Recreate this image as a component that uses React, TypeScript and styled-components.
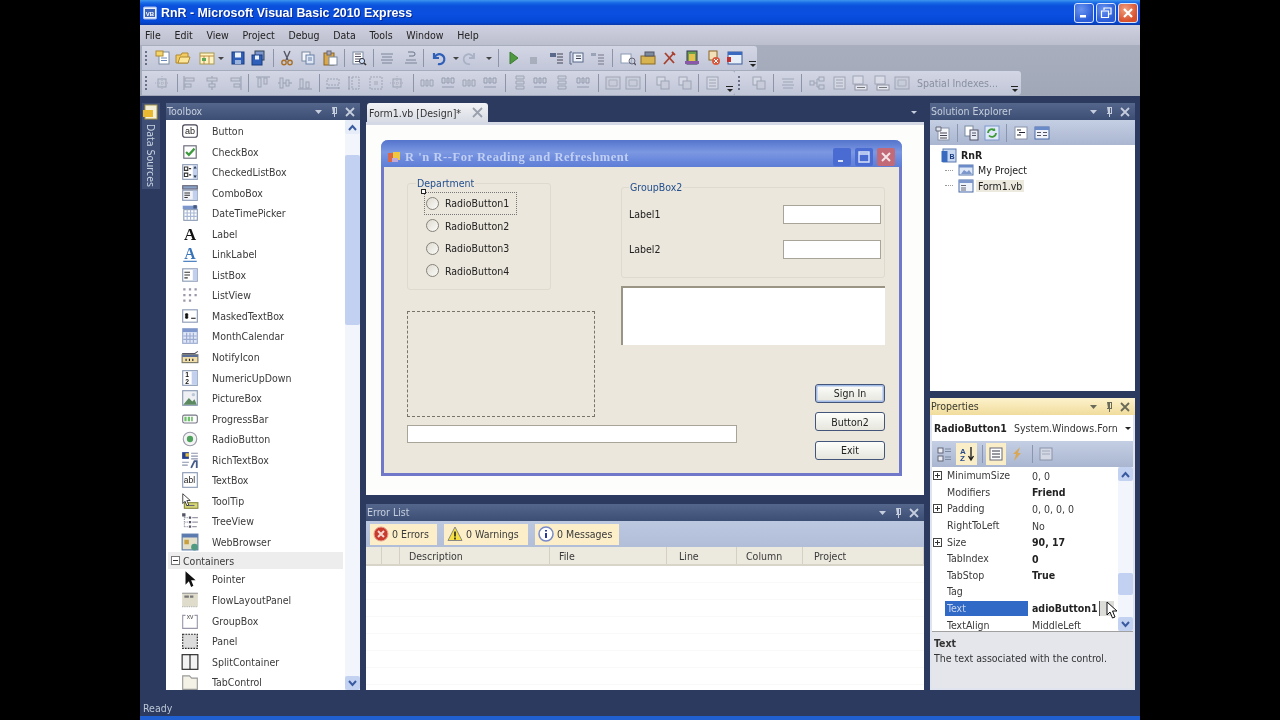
import React from 'react';
import styled, { createGlobalStyle } from 'styled-components';

const GlobalStyle = createGlobalStyle`
  html, body {
    margin: 0;
    padding: 0;
    background: #000;
    overflow: hidden;
  }
  * { box-sizing: border-box; }
`;

const ui = `'DejaVu Sans Condensed', 'DejaVu Sans', 'Liberation Sans', sans-serif`;

const Window = styled.div`
  width: 1000px;
  height: 720px;
  margin: 0 auto;
  display: flex;
  flex-direction: column;
  font-family: ${ui};
  font-stretch: condensed;
  font-size: 10.5px;
  color: #333;
  background: #2b3a5e;
  filter: blur(0.5px);
`;

const TitleBar = styled.div`
  height: 25px;
  display: flex;
  align-items: center;
  padding: 0 2px 0 3px;
  background: linear-gradient(#3f95ee 0, #1668e6 3px, #0a50dc 6px, #0a4fe0 14px, #0448d6 22px, #0a3aa8 25px);
`;

const TitleText = styled.div`
  margin-left: 4px;
  flex: 1;
  color: #fff;
  font-family: 'Liberation Sans', Arial, sans-serif;
  font-size: 12.4px;
  font-weight: 700;
  text-shadow: 1px 1px 0 #0a2a90;
`;

const CaptionButton = styled.div<{ $close?: boolean }>`
  width: 20px;
  height: 20px;
  margin-left: 2px;
  border: 1px solid #d8e4fa;
  border-radius: 3px;
  display: flex;
  align-items: center;
  justify-content: center;
  background: ${(p) => (p.$close ? 'radial-gradient(circle at 35% 30%, #f0a080, #d8502c 70%)' : 'radial-gradient(circle at 35% 30%, #6a94f0, #2a5cd8 70%)')};
`;

const MenuBar = styled.div`
  height: 20px;
  display: flex;
  align-items: center;
  padding-left: 5px;
  gap: 13.7px;
  color: #222;
  background: linear-gradient(#cfd0e0, #bcbfce);
`;

const ToolArea = styled.div`
  height: 51px;
  padding: 1px 0 0 2px;
  display: flex;
  flex-direction: column;
  gap: 1px;
  background: linear-gradient(#a9aebe, #a0a8b8);
`;

const ToolRow = styled.div`
  height: 24px;
  display: flex;
`;

const ToolStrip = styled.div<{ $width: number }>`
  width: ${(p) => p.$width}px;
  height: 24px;
  flex: none;
  display: flex;
  align-items: center;
  padding-left: 3px;
  border-radius: 0 3px 3px 0;
  background: linear-gradient(#d3d6e4, #c1c6d8);
`;

const Grip = styled.div`
  width: 2px;
  height: 14px;
  margin-right: 2px;
  background: repeating-linear-gradient(#6a7088 0 2px, transparent 2px 4px);
`;

const ToolSep = styled.div<{ $gap: number }>`
  width: 1px;
  height: 18px;
  margin-left: ${(p) => p.$gap}px;
  background: #8e94a8;
`;

const ToolSlot = styled.div<{ $gap: number; $dim?: boolean }>`
  width: 16px;
  height: 16px;
  flex: none;
  margin-left: ${(p) => p.$gap}px;
  opacity: ${(p) => (p.$dim ? 0.55 : 1)};
`;

const ToolDrop = styled.div<{ $gap: number }>`
  width: 7px;
  flex: none;
  margin-left: ${(p) => p.$gap}px;
  display: flex;
  justify-content: center;
`;

const Caret = styled.div<{ $color?: string }>`
  width: 0;
  height: 0;
  border-left: 3px solid transparent;
  border-right: 3px solid transparent;
  border-top: 3px solid ${(p) => p.$color || '#444'};
`;

const MoreGlyph = styled.div<{ $gap: number }>`
  margin-left: ${(p) => p.$gap}px;
  align-self: flex-end;
  margin-bottom: 3px;
  width: 7px;
  border-top: 1px solid #222;
  padding-top: 2px;
  display: flex;
  justify-content: center;
`;

const SpatialText = styled.div`
  margin-left: 7px;
  width: 94px;
  color: #8a90a0;
  white-space: nowrap;
`;

const Workspace = styled.div`
  height: 601px;
  display: flex;
  padding: 7px 5px 7px 2px;
  background: #2b3a5e;
`;

const SideTabs = styled.div`
  width: 24px;
  flex: none;
`;

const SideTab = styled.div`
  width: 18px;
  height: 86px;
  padding-top: 1px;
  display: flex;
  flex-direction: column;
  align-items: center;
  gap: 4px;
  background: #3e4e74;
`;

const SideTabText = styled.div`
  writing-mode: vertical-rl;
  color: #c8d2e2;
  white-space: nowrap;
`;

const DockHeader = styled.div<{ $active?: boolean }>`
  height: 17px;
  flex: none;
  display: flex;
  align-items: center;
  padding: 0 3px 0 1px;
  color: ${(p) => (p.$active ? '#3a3a30' : '#c6cede')};
  background: ${(p) => (p.$active ? 'linear-gradient(#fdf2cc, #f0dc9c)' : 'linear-gradient(#54668c, #3c4e74)')};
`;

const DockTitle = styled.div`
  flex: 1;
  margin-top: -1px;
  white-space: nowrap;
`;

const Toolbox = styled.div`
  width: 194px;
  flex: none;
  display: flex;
  flex-direction: column;
`;

const ToolboxBody = styled.div`
  position: relative;
  flex: 1;
  min-height: 0;
  display: flex;
  background: #fff;
`;

const ToolboxList = styled.div`
  flex: 1;
  padding-top: 0.7px;
  overflow: hidden;
`;

const ToolboxItem = styled.div`
  height: 20.55px;
  display: flex;
  align-items: center;
  padding-left: 15px;
  color: #3a3a3a;
`;

const ItemIcon = styled.div`
  width: 18px;
  height: 18px;
  margin-right: 13px;
  flex: none;
`;

const ToolboxGroup = styled.div`
  height: 17px;
  margin: 0 2px;
  display: flex;
  align-items: center;
  padding-left: 3px;
  gap: 3px;
  color: #3a3a3a;
  background: #ededed;
`;

const TreeBox = styled.div`
  width: 9px;
  height: 9px;
  flex: none;
  border: 1px solid #777;
  display: flex;
  align-items: center;
  justify-content: center;
  background: #fff;
  position: relative;
  &::after {
    content: '';
    width: 5px;
    height: 1px;
    background: #333;
  }
`;

const PlusBox = styled(TreeBox)`
  border-color: #444;
  &::before {
    content: '';
    position: absolute;
    width: 1px;
    height: 5px;
    background: #333;
  }
`;

const Scrollbar = styled.div<{ $width: number }>`
  width: ${(p) => p.$width}px;
  flex: none;
  display: flex;
  flex-direction: column;
  background: #f2f5fb;
`;

const ScrollButton = styled.div<{ $tint?: boolean }>`
  height: 14px;
  flex: none;
  display: flex;
  align-items: center;
  justify-content: center;
  border-radius: 2px;
  background: ${(p) => (p.$tint ? '#c4d2f2' : '#e6ecf8')};
`;

const ScrollTrack = styled.div<{ $top: number; $size: number }>`
  flex: 1;
  padding-top: ${(p) => p.$top}px;
  &::before {
    content: '';
    display: block;
    height: ${(p) => p.$size}px;
    border-radius: 2px;
    background: #c2d0f1;
  }
`;

const CursorMark = styled.svg<{ $left: number; $top: number }>`
  position: absolute;
  left: ${(p) => p.$left}px;
  top: ${(p) => p.$top}px;
`;

const Center = styled.div`
  width: 558px;
  margin-left: 6px;
  flex: none;
  display: flex;
  flex-direction: column;
`;

const DocTabs = styled.div`
  height: 19px;
  flex: none;
  display: flex;
  align-items: flex-end;
  justify-content: space-between;
  padding: 0 7px 0 1px;
`;

const DocTab = styled.div`
  width: 121px;
  height: 19px;
  display: flex;
  align-items: center;
  justify-content: space-between;
  padding: 0 5px 0 2px;
  color: #333;
  white-space: nowrap;
  border-radius: 3px 3px 0 0;
  background: linear-gradient(#f2f3f6, #d8dbe4);
`;

const DocMenu = styled.div`
  align-self: center;
  display: flex;
`;

const DocArea = styled.div`
  height: 373px;
  flex: none;
  padding: 18px 0 0 15px;
  border-top: 3px solid #d5d9e6;
  background: #fdfdfc;
`;

const Form = styled.div`
  width: 521px;
  height: 336px;
  margin-top: -3px;
  border: 3px solid #7078ca;
  border-top-width: 0;
  border-radius: 7px 7px 0 0;
  background: #ebe7dc;
`;

const FormTitle = styled.div`
  height: 27px;
  margin: 0 -3px;
  padding: 6px 7px 0 6px;
  display: flex;
  align-items: center;
  border-radius: 7px 7px 0 0;
  background: linear-gradient(#5474cc, #7c98e2 45%, #6a88dc 75%, #5e7ed6);
`;

const FormTitleText = styled.div`
  flex: 1;
  margin: 2px 0 0 4px;
  font-family: 'Liberation Serif', 'Times New Roman', serif;
  font-stretch: normal;
  font-size: 12.5px;
  font-weight: 700;
  letter-spacing: 0.55px;
  color: #c0cff2;
`;

const FormButton = styled.div<{ $close?: boolean }>`
  width: 18px;
  height: 18px;
  margin-left: 4px;
  display: flex;
  align-items: center;
  justify-content: center;
  border-radius: 2px;
  background: ${(p) => (p.$close ? '#c26a78' : '#4a6cd2')};
`;

const FormBody = styled.div`
  display: flex;
  padding-left: 23px;
`;

const FormLeft = styled.div`
  width: 214px;
  flex: none;
  padding-top: 16px;
`;

const FormRight = styled.div`
  width: 264px;
  flex: none;
  padding-top: 20px;
  display: flex;
  flex-direction: column;
`;

const GroupBox = styled.div<{ $width: number; $height: number }>`
  width: ${(p) => p.$width}px;
  height: ${(p) => p.$height}px;
  position: relative;
  border: 1px solid #dedacd;
  border-radius: 3px;
`;

const Legend = styled.div<{ $left: number }>`
  position: absolute;
  top: -7px;
  left: ${(p) => p.$left}px;
  padding: 0 1px;
  background: #ebe7dc;
  color: #24508e;
  line-height: 13px;
`;

const RadioList = styled.div`
  padding: 8px 0 0 16px;
`;

const RadioRow = styled.div<{ $selected?: boolean }>`
  width: 93px;
  height: 22.5px;
  display: flex;
  align-items: center;
  gap: 6px;
  padding-left: 2px;
  position: relative;
  color: #222;
  outline: ${(p) => (p.$selected ? '1px dotted #777' : 'none')};
  outline-offset: -1px;
`;

const SizeHandle = styled.div`
  position: absolute;
  left: -3px;
  top: -3px;
  width: 5px;
  height: 5px;
  border: 1px solid #222;
  background: #fff;
`;

const RadioDot = styled.div`
  width: 13px;
  height: 13px;
  border-radius: 50%;
  border: 1.5px solid #85837a;
  background: linear-gradient(135deg, #dedbd0, #fbfbf8);
`;

const FieldRow = styled.div<{ $top: number }>`
  position: absolute;
  left: 7px;
  right: 3px;
  top: ${(p) => p.$top}px;
  display: flex;
  align-items: center;
  justify-content: space-between;
  color: #222;
`;

const FieldLabel = styled.span`
  margin-top: -2px;
`;

const TextField = styled.div<{ $width: number; $height?: number }>`
  width: ${(p) => p.$width}px;
  height: ${(p) => p.$height || 19}px;
  border: 1px solid #a8a498;
  background: #fff;
`;

const RichBox = styled.div`
  width: 264px;
  height: 59px;
  margin-top: 8px;
  border-top: 2px solid #9a9484;
  border-left: 2px solid #9a9484;
  background: #fff;
`;

const DashedPanel = styled.div`
  width: 188px;
  height: 106px;
  margin: 21px 0 8px;
  border: 1px dashed #77746a;
`;

const WideField = styled(TextField)`
  flex: none;
`;

const FormButtons = styled.div`
  margin-top: 38.5px;
  display: flex;
  flex-direction: column;
  align-items: flex-end;
  gap: 9.5px;
`;

const PushButton = styled.div<{ $default?: boolean }>`
  width: 70px;
  height: 19px;
  display: flex;
  align-items: center;
  justify-content: center;
  color: #222;
  border: 1px solid #44557a;
  border-radius: 3px;
  background: linear-gradient(#fdfdfb, #e6e6de);
  box-shadow: ${(p) => (p.$default ? 'inset 0 0 0 1.5px #a4bce8' : 'none')};
`;

const ErrorPanel = styled.div`
  height: 186px;
  margin-top: 9px;
  display: flex;
  flex-direction: column;
  background: #fff;
`;

const ErrorBar = styled.div`
  height: 26px;
  flex: none;
  display: flex;
  align-items: center;
  padding-left: 4px;
  gap: 7px;
  background: linear-gradient(#bcc8e0, #b2bed8);
`;

const FilterButton = styled.div<{ $width: number }>`
  width: ${(p) => p.$width}px;
  height: 21px;
  display: flex;
  align-items: center;
  padding-left: 3px;
  gap: 3px;
  color: #3a3a3a;
  background: #fbeec8;
`;

const FilterIcon = styled.div`
  width: 16px;
  height: 16px;
  flex: none;
`;

const ColumnHeader = styled.div`
  height: 19px;
  flex: none;
  display: grid;
  grid-template-columns: 16px 18px 150px 117px 70px 66px 1fr;
  border-bottom: 2px solid #d8d4c8;
  background: #ece9de;
`;

const ColumnCell = styled.div<{ $pad: number }>`
  padding-left: ${(p) => p.$pad}px;
  display: flex;
  align-items: center;
  color: #3a3a3a;
  border-right: 1px solid #d4d0c4;
`;

const ErrorRows = styled.div`
  flex: 1;
  background: repeating-linear-gradient(#fff 0 16px, #f9f9f7 16px 17px);
`;

const Right = styled.div`
  width: 205px;
  margin-left: 6px;
  flex: none;
  display: flex;
  flex-direction: column;
`;

const SolutionPanel = styled.div`
  height: 288px;
  flex: none;
  display: flex;
  flex-direction: column;
  background: #fff;
`;

const PaneBar = styled.div<{ $height: number }>`
  height: ${(p) => p.$height}px;
  flex: none;
  display: flex;
  align-items: center;
  padding-left: 5px;
  background: linear-gradient(#c4cfe4, #aab6d0);
`;

const PaneButton = styled.div<{ $gap: number; $on?: boolean; $wide?: number }>`
  width: ${(p) => p.$wide || 16}px;
  height: ${(p) => (p.$on ? 22 : 16)}px;
  margin-left: ${(p) => p.$gap}px;
  flex: none;
  display: flex;
  align-items: center;
  justify-content: center;
  background: ${(p) => (p.$on ? '#faeec8' : 'transparent')};
`;

const PaneIcon = styled.div`
  width: 16px;
  height: 16px;
`;

const PaneSep = styled.div<{ $gap: number }>`
  width: 1px;
  height: 18px;
  margin-left: ${(p) => p.$gap}px;
  background: #8a96b0;
`;

const Tree = styled.div`
  padding: 2px 0 0 11px;
  display: flex;
  flex-direction: column;
`;

const TreeRow = styled.div<{ $indent?: number; $bold?: boolean; $mark?: boolean }>`
  height: 15.5px;
  display: flex;
  align-items: center;
  padding-left: ${(p) => p.$indent || 0}px;
  gap: 2px;
  color: #222;
  font-weight: ${(p) => (p.$bold ? 700 : 400)};
  position: relative;
  & > span {
    padding: 0 2px;
    background: ${(p) => (p.$mark ? '#ece9de' : 'transparent')};
  }
`;

const TreeIcon = styled.div`
  width: 16px;
  height: 16px;
  flex: none;
`;

const TreeStem = styled.div`
  width: 8px;
  height: 1px;
  margin-right: 3px;
  border-top: 1px dotted #999;
`;

const PropertiesPanel = styled.div`
  flex: 1;
  min-height: 0;
  margin-top: 7px;
  display: flex;
  flex-direction: column;
  border: solid #e0e4ee;
  border-width: 0 2px 2px;
  background: #e4e6ec;
`;

const PropHeader = styled(DockHeader)`
  margin: 0 -2px;
`;

const ObjectCombo = styled.div`
  height: 26px;
  flex: none;
  display: flex;
  align-items: center;
  padding: 0 7px 0 2px;
  gap: 7px;
  white-space: nowrap;
  background: #fff;
`;

const ObjectName = styled.b`
  color: #222;
`;

const ObjectType = styled.div`
  flex: 1;
  color: #333;
`;

const PropGrid = styled.div`
  height: 165px;
  flex: none;
  display: flex;
  position: relative;
  background: #fff;
  border-bottom: 1px solid #a0a0a0;
`;

const PropList = styled.div`
  flex: 1;
  padding-top: 0.5px;
  overflow: hidden;
`;

const PropRow = styled.div`
  height: 16.6px;
  display: grid;
  grid-template-columns: 12px 83px 1fr;
  align-items: center;
  padding-left: 1px;
  position: relative;
`;

const PropGutter = styled.div`
  display: flex;
  justify-content: flex-start;
`;

const PropName = styled.div<{ $selected?: boolean }>`
  height: 15px;
  padding-left: 2px;
  line-height: 15px;
  color: ${(p) => (p.$selected ? '#c8d6f0' : '#3a3a3a')};
  background: ${(p) => (p.$selected ? '#3169c6' : 'transparent')};
`;

const PropValue = styled.div<{ $bold?: boolean }>`
  padding-left: 4px;
  color: ${(p) => (p.$bold ? '#222' : '#3a3a3a')};
  font-weight: ${(p) => (p.$bold ? 700 : 400)};
  white-space: nowrap;
`;

const EditBox = styled.span`
  display: inline-block;
  width: 15px;
  height: 15px;
  margin-left: 1px;
  vertical-align: middle;
  background: #dcdcd8;
  border-left: 1px solid #555;
`;

const PropDesc = styled.div`
  flex: 1;
  padding: 4px 2px;
  color: #333;
  line-height: 15px;
`;

const PropDescTitle = styled.div`
  font-weight: 700;
`;

const Status = styled.div`
  height: 19px;
  flex: none;
  display: flex;
  align-items: center;
  padding: 2px 0 0 3px;
  color: #bcc6d6;
  background: #2b3a5e;
`;

const TaskEdge = styled.div`
  height: 4px;
  flex: none;
  background: #1f5fd0;
`;

const Svg = ({ size = 16, children }: { size?: number; children: React.ReactNode }) => (
  <svg width={size} height={size} viewBox="0 0 16 16" style={{ display: 'block' }}>
    {children}
  </svg>
);

const sheet = (x = 3, w = 10) => <rect x={x} y="2" width={w} height="12" fill="#fff" stroke="#7b8aa0" />;
const lines = (x: number, y: number, n: number, w = 6) => (
  <path d={Array.from({ length: n }, (_, i) => `M${x} ${y + i * 2.5}h${w}`).join('')} stroke="#556" fill="none" />
);

const toolGlyphs: Record<string, React.ReactNode> = {
  newProject: (<>{sheet(4, 10)}<rect x="1" y="1" width="7" height="5" fill="#f4d46c" stroke="#b08a30" /><path d="M6 8h6M6 10.5h6" stroke="#6a88b8" /></>),
  open: (<><path d="M1 5h5l1-2h6v10H1z" fill="#f2cb62" stroke="#b08a30" /><path d="M3 13l2-6h10l-2 6z" fill="#fbe69a" stroke="#b08a30" /></>),
  addItem: (<><rect x="1" y="3" width="14" height="11" fill="#fdf3c4" stroke="#a89850" /><path d="M1 6h14M5 6v8M10 6v8" stroke="#c08a40" /><rect x="3" y="8" width="4" height="3" fill="#5fa65a" /></>),
  save: (<><rect x="2" y="2" width="12" height="12" fill="#2f5fb8" stroke="#1a3c80" /><rect x="5" y="2.5" width="6" height="5" fill="#eef2fa" /><rect x="5" y="10" width="6" height="4" fill="#9cb4dc" /></>),
  saveAll: (<><rect x="5" y="1" width="9" height="9" fill="#7d97cc" stroke="#345" /><rect x="2" y="5" width="10" height="10" fill="#2f5fb8" stroke="#1a3c80" /><rect x="5" y="5.5" width="4" height="4" fill="#eef2fa" /></>),
  cut: (<><path d="M5 1l4 9M11 1L7 10" stroke="#556" strokeWidth="1.4" fill="none" /><circle cx="5" cy="12.5" r="2.2" fill="none" stroke="#a87028" strokeWidth="1.4" /><circle cx="11" cy="12.5" r="2.2" fill="none" stroke="#a87028" strokeWidth="1.4" /></>),
  copy: (<><rect x="2" y="2" width="8" height="9" fill="#f4f6fa" stroke="#7b8aa0" /><rect x="6" y="5" width="8" height="9" fill="#dfe6f4" stroke="#6880a8" /><path d="M8 8h4M8 10h4" stroke="#6880a8" /></>),
  paste: (<><rect x="2" y="3" width="10" height="12" fill="#d8a84e" stroke="#8a6424" /><rect x="5" y="1" width="4" height="4" fill="#aab" stroke="#667" /><rect x="7" y="7" width="8" height="8" fill="#fff" stroke="#7b8aa0" /></>),
  find: (<>{sheet(2, 10)}{lines(4, 4, 4)}<circle cx="11" cy="11" r="2.6" fill="#cfe0f4" stroke="#334" /><path d="M13 13l2 2" stroke="#333" strokeWidth="1.6" /></>),
  lines: (<path d="M2 4h12M3 7h10M2 10h12M3 13h10" stroke="#7b8496" fill="none" />),
  comment: (<><path d="M2 13h12M3 10h10" stroke="#7b8496" fill="none" /><path d="M5 2h5a2 2 0 010 4H6" stroke="#6a7488" fill="none" /></>),
  undo: (<path d="M4 3v5h5M4.5 8A5 5 0 1 1 8 14" stroke="#2f5fb8" strokeWidth="2.2" fill="none" />),
  redo: (<path d="M12 3v5H7M11.5 8A5 5 0 1 0 8 14" stroke="#a8b2c4" strokeWidth="1.8" fill="none" />),
  play: (<path d="M5 2l8 6-8 6z" fill="#4f9a40" stroke="#3a7a30" />),
  stop: (<rect x="5" y="7" width="7" height="7" fill="#a9aebd" />),
  listA: (<><rect x="1" y="3" width="6" height="4" fill="#59698a" /><path d="M8 4h6M8 7h6M8 10h6M8 13h6" stroke="#445" /></>),
  listB: (<><path d="M3 2H1v12h2" stroke="#59698a" fill="none" /><rect x="4" y="3" width="10" height="9" fill="#eef2fa" stroke="#59698a" /><path d="M7 6h5M7 8.5h5" stroke="#445" /></>),
  listC: (<><rect x="1" y="3" width="5" height="3" fill="#9aa4b6" /><path d="M8 5h6M8 8h6M8 11h6M8 14h6" stroke="#778" /></>),
  solution: (<><rect x="1" y="4" width="10" height="9" fill="#fff" stroke="#8a9ab4" /><circle cx="12" cy="11" r="3" fill="none" stroke="#667" /><path d="M14 13l2 2" stroke="#556" strokeWidth="1.4" /></>),
  folderCase: (<><rect x="1" y="6" width="14" height="8" fill="#d8b450" stroke="#8a6a24" /><rect x="5" y="2" width="9" height="4" fill="#7c8c9c" stroke="#556" /></>),
  tools: (<path d="M3 14L12 4M11 2l3 3M4 3l9 10" stroke="#a84030" strokeWidth="1.8" fill="none" />),
  box3d: (<><rect x="3" y="1" width="10" height="13" fill="#6ca04c" stroke="#335" /><rect x="5" y="4" width="6" height="8" fill="#e6c04c" /><rect x="1" y="11" width="14" height="3" fill="#8a58a8" /></>),
  clip: (<><rect x="3" y="1" width="8" height="9" fill="#f4e0b8" stroke="#8a6424" /><circle cx="10" cy="11" r="4" fill="#d85a40" /><path d="M8 9l4 4M12 9l-4 4" stroke="#fff" /></>),
  form: (<><rect x="1" y="2" width="14" height="12" fill="#e6eef8" stroke="#3a5a98" /><rect x="1" y="2" width="14" height="3" fill="#3a6ac0" /><rect x="0" y="7" width="4" height="5" fill="#c03030" /></>),
  alignL: (<><path d="M2 1v14" stroke="#6a7488" /><rect x="3" y="3" width="9" height="3" fill="#c8ccd8" stroke="#7a8294" /><rect x="3" y="9" width="6" height="3" fill="#c8ccd8" stroke="#7a8294" /></>),
  alignC: (<><path d="M8 1v14" stroke="#6a7488" /><rect x="3" y="3" width="10" height="3" fill="#c8ccd8" stroke="#7a8294" /><rect x="5" y="9" width="6" height="3" fill="#c8ccd8" stroke="#7a8294" /></>),
  alignR: (<><path d="M14 1v14" stroke="#6a7488" /><rect x="4" y="3" width="9" height="3" fill="#c8ccd8" stroke="#7a8294" /><rect x="7" y="9" width="6" height="3" fill="#c8ccd8" stroke="#7a8294" /></>),
  alignT: (<><path d="M1 2h14" stroke="#6a7488" /><rect x="3" y="3" width="3" height="9" fill="#c8ccd8" stroke="#7a8294" /><rect x="9" y="3" width="3" height="6" fill="#c8ccd8" stroke="#7a8294" /></>),
  alignM: (<><path d="M1 8h14" stroke="#6a7488" /><rect x="3" y="3" width="3" height="10" fill="#c8ccd8" stroke="#7a8294" /><rect x="9" y="5" width="3" height="6" fill="#c8ccd8" stroke="#7a8294" /></>),
  alignB: (<><path d="M1 14h14" stroke="#6a7488" /><rect x="3" y="4" width="3" height="9" fill="#c8ccd8" stroke="#7a8294" /><rect x="9" y="7" width="3" height="6" fill="#c8ccd8" stroke="#7a8294" /></>),
  sizeW: (<><rect x="2" y="4" width="12" height="6" fill="none" stroke="#7a8294" strokeDasharray="2 1" /><path d="M2 13h12M2 12v2M14 12v2" stroke="#6a7488" /></>),
  sizeH: (<><rect x="5" y="2" width="7" height="12" fill="none" stroke="#7a8294" strokeDasharray="2 1" /><path d="M2 2v12M1 2h2M1 14h2" stroke="#6a7488" /></>),
  sizeAll: (<><rect x="2" y="2" width="12" height="12" fill="none" stroke="#7a8294" strokeDasharray="2 1" /><rect x="6" y="6" width="4" height="4" fill="#a8aebc" /></>),
  grid: (<><rect x="4" y="4" width="8" height="8" fill="#c8ccd8" stroke="#7a8294" /><path d="M8 1v14M1 8h14" stroke="#8a92a4" strokeDasharray="1 1" /></>),
  spaceH: (<path d="M2 5h3v6H2zM7 5h2v6H7zM11 5h3v6h-3z" fill="#c8ccd8" stroke="#7a8294" />),
  spaceV: (<path d="M2 3h3v5H2zM7 3h2v5H7zM11 3h3v5h-3zM2 12h12" fill="#c8ccd8" stroke="#6a7488" />),
  stackV: (<path d="M4 1h8v3H4zM4 6h8v3H4zM4 11h8v3H4z" fill="#c8ccd8" stroke="#7a8294" />),
  frame: (<><rect x="1" y="2" width="14" height="12" fill="#c8ccd8" stroke="#7a8294" /><path d="M4 5h8v6H4z" fill="none" stroke="#8a92a4" /></>),
  layer: (<><rect x="2" y="2" width="8" height="8" fill="#dfe2ea" stroke="#7a8294" /><rect x="6" y="6" width="8" height="8" fill="#c8ccd8" stroke="#7a8294" /></>),
  tree: (<><rect x="1" y="6" width="4" height="4" fill="none" stroke="#7a8294" /><rect x="10" y="2" width="5" height="4" fill="none" stroke="#7a8294" /><rect x="10" y="10" width="5" height="4" fill="none" stroke="#7a8294" /><path d="M5 8h3M8 4v8M8 4h2M8 12h2" stroke="#7a8294" /></>),
  bars: (<><rect x="3" y="2" width="11" height="12" fill="#dde0e8" stroke="#7a8294" /><path d="M5 5h7M5 8h7M5 11h7" stroke="#7a8294" /></>),
  textAb: (<><rect x="1" y="1" width="10" height="8" fill="#e4e6ee" stroke="#7a8294" /><rect x="3" y="10" width="12" height="5" fill="#fff" stroke="#667" /><path d="M5 12.5h8" stroke="#333" /></>),
};

type ToolEntry = { k: 'i' | 's' | 'd' | 'm'; g: number; n?: string };
const i = (n: string, g: number): ToolEntry => ({ k: 'i', n, g });
const s = (g: number): ToolEntry => ({ k: 's', g });
const d = (g: number): ToolEntry => ({ k: 'd', g });
const m = (g: number): ToolEntry => ({ k: 'm', g });

const standardTools: ToolEntry[] = [
  i('newProject', 6), i('open', 4), i('addItem', 8), d(2), i('save', 6), i('saveAll', 4), s(7), i('cut', 5), i('copy', 5), i('paste', 6), s(6),
  i('find', 6), s(6), i('lines', 5), i('comment', 8), s(4), i('undo', 6), d(6), i('redo', 3), d(7), s(6), i('play', 6), i('stop', 4), i('listA', 8),
  i('listB', 4), i('listC', 5), s(6), i('solution', 7), i('folderCase', 4), i('tools', 5), i('box3d', 7), i('clip', 6), i('form', 5), m(6),
];

const layoutTools: ToolEntry[] = [
  i('grid', 5), s(7), i('alignL', 4), i('alignC', 6), i('alignR', 7), s(5), i('alignT', 6), i('alignM', 6), i('alignB', 4), s(6), i('sizeW', 5), i('sizeH', 6),
  i('sizeAll', 5), i('grid', 5), s(8), i('spaceH', 5), i('spaceV', 5), i('spaceH', 5), i('spaceV', 5), s(7), i('stackV', 6), i('spaceV', 4), i('stackV', 6),
  i('spaceV', 5), s(7), i('frame', 6), i('frame', 4), s(4), i('layer', 9), i('layer', 6), s(5), i('bars', 5), m(6),
];

const ToolItems = ({ items, dim }: { items: ToolEntry[]; dim?: boolean }) => (
  <>
    {items.map((t, idx) => {
      if (t.k === 's') return <ToolSep key={idx} $gap={t.g} />;
      if (t.k === 'd') return <ToolDrop key={idx} $gap={t.g}><Caret /></ToolDrop>;
      if (t.k === 'm') return <MoreGlyph key={idx} $gap={t.g}><Caret $color="#222" /></MoreGlyph>;
      return <ToolSlot key={idx} $gap={t.g} $dim={dim}><Svg>{toolGlyphs[t.n as string]}</Svg></ToolSlot>;
    })}
  </>
);

const boxGlyphs: Record<string, React.ReactNode> = {
  Button: (<><rect x="1.5" y="2.5" width="13" height="11" rx="2" fill="#fff" stroke="#445" /><text x="8" y="11" textAnchor="middle" fontSize="8" fill="#222" fontFamily="Liberation Sans">ab</text></>),
  CheckBox: (<><rect x="2.5" y="2.5" width="11" height="11" fill="#fff" stroke="#667" /><path d="M4.5 8l2.5 2.5L12 5" stroke="#3e9a3e" strokeWidth="2" fill="none" /></>),
  CheckedListBox: (<><rect x="1.5" y="1.5" width="13" height="13" fill="#fff" stroke="#8a9ab4" /><path d="M3 3.5h3v3H3zM3 9h3v3H3z" fill="none" stroke="#333" /><path d="M7 5h2M7 10.5h2" stroke="#333" /><rect x="10.5" y="2" width="4" height="12" fill="#c2d0ee" /><path d="M11.5 5l1-1.5 1 1.5M11.5 11l1 1.5 1-1.5" stroke="#345" fill="none" /></>),
  ComboBox: (<><rect x="1.5" y="1.5" width="13" height="3" fill="#8aa2c8" stroke="#667" /><rect x="1.5" y="5.5" width="13" height="9" fill="#f0f2f8" stroke="#8a9ab4" /><path d="M3 8h5M3 10h5M3 12h3" stroke="#333" /><rect x="10.5" y="6" width="4" height="8" fill="#c2d0ee" /></>),
  DateTimePicker: (<><rect x="1.5" y="1.5" width="13" height="3" fill="#7d97cc" /><rect x="2.5" y="5" width="12" height="9.5" fill="#fff" stroke="#8a9ab4" /><path d="M5.5 5v9M8.5 5v9M11.5 5v9M3 8h11M3 11h11" stroke="#a8b8d4" /><rect x="11" y="1" width="3" height="3" fill="#445a80" /></>),
  Label: (<text x="8" y="13.5" textAnchor="middle" fontSize="15" fontWeight="700" fill="#111" fontFamily="Liberation Serif">A</text>),
  LinkLabel: (<><text x="8" y="12.5" textAnchor="middle" fontSize="14" fontWeight="700" fill="#3a74b8" fontFamily="Liberation Serif">A</text><path d="M2 14.5h12" stroke="#3a74b8" /></>),
  ListBox: (<><rect x="1.5" y="2.5" width="13" height="11" fill="#fff" stroke="#8a9ab4" /><path d="M3 5.5h5M3 8h5M3 10.5h3" stroke="#333" /><rect x="10.5" y="3" width="4" height="10" fill="#c2d0ee" /></>),
  ListView: (<path d="M2 2h2v2H2zM7 2h2v2H7zM12 2h2v2h-2zM2 7h2v2H2zM7 7h2v2H7zM12 7h2v2h-2zM2 12h2v2H2zM7 12h2v2H7z" fill="#99a" />),
  MaskedTextBox: (<><rect x="1.5" y="2.5" width="13" height="11" fill="#fff" stroke="#8a9ab4" /><path d="M3.5 7h3M3.5 9h3M4.5 5.5v5M5.5 5.5v5M9 10h4" stroke="#111" /></>),
  MonthCalendar: (<><rect x="1.5" y="1.5" width="13" height="13" fill="#dfe6f6" stroke="#9aaad0" /><rect x="1.5" y="1.5" width="13" height="3" fill="#7d97cc" /><path d="M5 5v9M8 5v9M11 5v9M2 8h12M2 11h12" stroke="#9aaad0" /></>),
  NotifyIcon: (<><path d="M1 5h11l3-2" stroke="#556" fill="none" /><rect x="1" y="6" width="14" height="7" fill="#f0dfa8" stroke="#776" /><rect x="1" y="6" width="14" height="2" fill="#5a6e98" /><path d="M4 10.5h1M7 10.5h1M10 10.5h1" stroke="#223" strokeWidth="2" /></>),
  NumericUpDown: (<><rect x="1.5" y="1.5" width="13" height="13" fill="#fff" stroke="#8a9ab4" /><text x="5.5" y="7.5" textAnchor="middle" fontSize="6" fontWeight="700" fill="#111" fontFamily="Liberation Sans">1</text><text x="5.5" y="13.5" textAnchor="middle" fontSize="6" fontWeight="700" fill="#111" fontFamily="Liberation Sans">2</text><rect x="9.5" y="2" width="5" height="12" fill="#c2d0ee" /></>),
  PictureBox: (<><rect x="1.5" y="1.5" width="13" height="13" fill="#eef0f4" stroke="#8a9ab4" /><path d="M2 14l5-6 3 3 2-2 2 5z" fill="#5c8a60" /><circle cx="11" cy="5" r="1.5" fill="#bcc8d8" /></>),
  ProgressBar: (<><rect x="1.5" y="4.5" width="13" height="7" rx="1.5" fill="#fff" stroke="#778" /><path d="M3 6h2v4H3zM6 6h2v4H6zM9 6h1.5v4H9z" fill="#6ec06a" /></>),
  RadioButton: (<><circle cx="8" cy="8" r="6" fill="#f4f4f4" stroke="#99a" /><circle cx="8" cy="8" r="2.8" fill="#4fa25c" /></>),
  RichTextBox: (<><rect x="1" y="1" width="6" height="6" fill="#24408c" /><rect x="4" y="2" width="3" height="3" fill="#e8c040" /><path d="M9 2h6M9 4.5h6M9 7h6M1 10h6M1 12.5h5" stroke="#8a94aa" /><path d="M9 15l3-6h2v6" stroke="#445a88" strokeWidth="1.6" fill="none" /></>),
  TextBox: (<><rect x="1.5" y="1.5" width="13" height="13" fill="#fff" stroke="#8a9ab4" /><text x="7.5" y="11" textAnchor="middle" fontSize="7.5" fill="#222" fontFamily="Liberation Sans">abl</text></>),
  ToolTip: (<><rect x="3" y="9.5" width="12" height="5" fill="#d8d878" stroke="#8a8a40" /><path d="M5 12h7" stroke="#667" /></>),
  TreeView: (<><path d="M3 2v11M3 5h4M3 9h4M3 13h4" stroke="#99a" strokeDasharray="1 1" /><path d="M1 1h3v3H1zM7 4h2v2H7zM7 8h2v2H7zM7 12h2v2H7z" fill="#556" /><path d="M10 5h5M10 9h5M10 13h4" stroke="#99a" /></>),
  WebBrowser: (<><rect x="1" y="1" width="14" height="14" fill="#e4dfc8" stroke="#5a7aa8" /><rect x="1" y="1" width="14" height="3" fill="#5a7ab0" /><rect x="3" y="6" width="4" height="4" fill="#c8a040" /><circle cx="12" cy="12.5" r="3" fill="#4f9a80" /></>),
  Pointer: (<path d="M4 1l0 12 3-3 2 5 2-1-2-5h4z" fill="#111" />),
  FlowLayoutPanel: (<><rect x="1" y="2" width="14" height="12" fill="#e0dccc" /><path d="M3 4h4v2H3zM8 4h3v2H8z" fill="#777" /><path d="M1 2h14" stroke="#999" /><path d="M1 14h14" stroke="#aaa" strokeDasharray="1 1" /></>),
  GroupBox: (<><path d="M4 3H1.5v11.5h13V3H12" fill="#fff" stroke="#99a" /><text x="8" y="6" textAnchor="middle" fontSize="6" fill="#555" fontFamily="Liberation Sans">xv</text></>),
  Panel: (<rect x="1.5" y="2" width="13" height="12.5" fill="#dcdcdc" stroke="#222" strokeDasharray="1.5 1" />),
  SplitContainer: (<><rect x="1" y="1.5" width="14" height="13" fill="#f2f2f2" stroke="#222" /><path d="M8 1.5v13" stroke="#222" /></>),
  TabControl: (<path d="M1.5 14.5v-12h6l2 2h5v10z" fill="#f4f2e6" stroke="#999" />),
};

const toolboxControls = ['Button', 'CheckBox', 'CheckedListBox', 'ComboBox', 'DateTimePicker', 'Label', 'LinkLabel', 'ListBox', 'ListView', 'MaskedTextBox', 'MonthCalendar', 'NotifyIcon', 'NumericUpDown', 'PictureBox', 'ProgressBar', 'RadioButton', 'RichTextBox', 'TextBox', 'ToolTip', 'TreeView', 'WebBrowser'];
const toolboxContainers = ['Pointer', 'FlowLayoutPanel', 'GroupBox', 'Panel', 'SplitContainer', 'TabControl'];

const ToolboxEntry = ({ name }: { name: string }) => (
  <ToolboxItem>
    <ItemIcon><Svg size={18}>{boxGlyphs[name]}</Svg></ItemIcon>
    {name}
  </ToolboxItem>
);

const HeaderIcons = ({ color }: { color: string }) => (
  <svg width="44" height="12" viewBox="0 0 44 12">
    <path d="M2 4h7L5.5 8z" fill={color} />
    <path d="M19 1h5v6h-1v-5h-1v5h2v1h-2v3h-1V8h-2V7h1z" fill={color} />
    <path d="M33 2l8 8M41 2l-8 8" stroke={color} strokeWidth="1.8" />
  </svg>
);

const Chevron = ({ up, color = '#3a5aa0' }: { up?: boolean; color?: string }) => (
  <svg width="9" height="7" viewBox="0 0 9 7">
    <path d={up ? 'M1 6l3.5-4L8 6' : 'M1 1l3.5 4L8 1'} stroke={color} strokeWidth="2" fill="none" />
  </svg>
);

const Cursor = ({ left, top, size }: { left: number; top: number; size: number }) => (
  <CursorMark $left={left} $top={top} width={size} height={size * 1.5} viewBox="0 0 12 18">
    <path d="M1 1v13l3-3 2.5 6 2.5-1-2.5-6H11z" fill="#fff" stroke="#111" />
  </CursorMark>
);

const RadioItem = ({ label, selected }: { label: string; selected?: boolean }) => (
  <RadioRow $selected={selected}>
    {selected && <SizeHandle />}
    <RadioDot />
    {label}
  </RadioRow>
);

const properties = [
  { name: 'MinimumSize', value: '0, 0', plus: true },
  { name: 'Modifiers', value: 'Friend', bold: true },
  { name: 'Padding', value: '0, 0, 0, 0', plus: true },
  { name: 'RightToLeft', value: 'No' },
  { name: 'Size', value: '90, 17', bold: true, plus: true },
  { name: 'TabIndex', value: '0', bold: true },
  { name: 'TabStop', value: 'True', bold: true },
  { name: 'Tag', value: '' },
  { name: 'Text', value: 'adioButton1', bold: true, selected: true },
  { name: 'TextAlign', value: 'MiddleLeft' },
];

const paneGlyphs: Record<string, React.ReactNode> = {
  props: (<><rect x="3" y="3" width="11" height="12" fill="#f4f6fa" stroke="#8a94aa" /><path d="M1 2h5v4H1z" fill="#dfe4ee" stroke="#667" /><path d="M5 8h7M5 10.5h7M5 13h7" stroke="#445" /></>),
  files: (<><rect x="2" y="1" width="8" height="10" fill="#fff" stroke="#7b8aa0" /><rect x="7" y="5" width="8" height="10" fill="#e6ebf6" stroke="#556" /><path d="M9 8h4M9 10.5h4" stroke="#556" /></>),
  refresh: (<><rect x="1" y="1" width="14" height="14" fill="#dfe8f8" stroke="#7d97cc" /><path d="M4 8a4 4 0 017-2.5M12 8a4 4 0 01-7 2.5" stroke="#3f9a3a" strokeWidth="1.8" fill="none" /><path d="M11 3v3H8" fill="#3f9a3a" /></>),
  code: (<><rect x="2" y="2" width="12" height="12" fill="#fff" stroke="#8a94aa" /><path d="M4 5h4M6 7.5h6M4 10h4" stroke="#223" /></>),
  view: (<><rect x="1" y="2" width="14" height="12" fill="#f0f4fa" stroke="#4a6aa8" /><rect x="1" y="2" width="14" height="3" fill="#6a8ac8" /><path d="M3 7.5h4M9 7.5h4M3 10.5h4M9 10.5h4" stroke="#556" /></>),
  category: (<><rect x="1" y="2" width="5" height="5" fill="#e8ecf4" stroke="#667" /><rect x="1" y="10" width="5" height="5" fill="#e8ecf4" stroke="#667" /><path d="M8 3h6M8 5.5h6M8 11h6M8 13.5h6" stroke="#7b8aa0" /></>),
  az: (<><text x="1" y="7.5" fontSize="8" fontWeight="700" fill="#2a4a8c" fontFamily="Liberation Sans">A</text><text x="1" y="15" fontSize="8" fontWeight="700" fill="#2a4a8c" fontFamily="Liberation Sans">Z</text><path d="M12 1v12M9.5 10l2.5 4 2.5-4" stroke="#222" strokeWidth="1.4" fill="none" /></>),
  list: (<><rect x="2" y="2" width="12" height="12" fill="#fff" stroke="#667" /><path d="M4 5h8M4 8h8M4 11h8" stroke="#334" /></>),
  bolt: (<path d="M11 1L4 8h3l-2 7 7-8H9z" fill="#d8a858" />),
  pages: (<><rect x="2" y="2" width="12" height="12" fill="#d4d8e4" stroke="#8a94aa" /><path d="M4 5h8M4 8h8" stroke="#a0a8ba" /></>),
  project: (<><rect x="2" y="2" width="13" height="13" fill="#c8d8f0" stroke="#5a7ab0" /><rect x="0.5" y="4" width="6" height="11" fill="#3a6ac0" /><text x="8.5" y="12" fontSize="7" fontWeight="700" fill="#1a3a80" fontFamily="Liberation Sans">B</text></>),
  myProject: (<><rect x="1" y="3" width="14" height="10" fill="#dfe8f6" stroke="#5a7ab0" /><rect x="1" y="3" width="14" height="2.5" fill="#6a8ac8" /><path d="M3 12l3-4 3 2 2-2 3 4" fill="#7d97cc" /></>),
  formFile: (<><rect x="1" y="2" width="14" height="12" fill="#eef2fa" stroke="#4a6aa8" /><rect x="1" y="2" width="14" height="3" fill="#7d97cc" /><path d="M3 7.5h5M3 10h5M3 12h5" stroke="#667" /></>),
};

const App = () => {
  return (
    <Window>
      <GlobalStyle />
      <TitleBar>
        <svg width="14" height="14" viewBox="0 0 14 14">
          <rect x="0.5" y="1" width="13" height="12" rx="1" fill="#e8eefa" stroke="#9ab4e8" />
          <rect x="2" y="3" width="10" height="8" fill="#3a62b8" />
          <text x="7" y="9.5" textAnchor="middle" fontSize="6" fontWeight="700" fill="#fff" fontFamily="Liberation Sans">VB</text>
        </svg>
        <TitleText>RnR - Microsoft Visual Basic 2010 Express</TitleText>
        <CaptionButton>
          <svg width="12" height="12" viewBox="0 0 12 12"><rect x="2" y="8" width="6" height="2.5" fill="#fff" /></svg>
        </CaptionButton>
        <CaptionButton>
          <svg width="12" height="12" viewBox="0 0 12 12"><path d="M4 3V1h7v6H9M1.5 4h7v6.5h-7z" fill="none" stroke="#fff" strokeWidth="1.2" /></svg>
        </CaptionButton>
        <CaptionButton $close>
          <svg width="12" height="12" viewBox="0 0 12 12"><path d="M2 2l8 8M10 2l-8 8" stroke="#fff" strokeWidth="2.2" /></svg>
        </CaptionButton>
      </TitleBar>

      <MenuBar>
        {['File', 'Edit', 'View', 'Project', 'Debug', 'Data', 'Tools', 'Window', 'Help'].map((item) => (
          <span key={item}>{item}</span>
        ))}
      </MenuBar>

      <ToolArea>
        <ToolRow>
          <ToolStrip $width={615}>
            <Grip />
            <ToolItems items={standardTools} />
          </ToolStrip>
        </ToolRow>
        <ToolRow>
          <ToolStrip $width={593}>
            <Grip />
            <ToolItems items={layoutTools} dim />
          </ToolStrip>
          <ToolStrip $width={286}>
            <Grip />
            <ToolSlot $gap={9} $dim><Svg>{toolGlyphs.layer}</Svg></ToolSlot>
            <ToolSep $gap={6} />
            <ToolSlot $gap={6} $dim><Svg>{toolGlyphs.lines}</Svg></ToolSlot>
            <ToolSep $gap={5} />
            <ToolSlot $gap={7} $dim><Svg>{toolGlyphs.tree}</Svg></ToolSlot>
            <ToolSlot $gap={6} $dim><Svg>{toolGlyphs.bars}</Svg></ToolSlot>
            <ToolSlot $gap={5} $dim><Svg>{toolGlyphs.textAb}</Svg></ToolSlot>
            <ToolSlot $gap={6} $dim><Svg>{toolGlyphs.textAb}</Svg></ToolSlot>
            <ToolSlot $gap={4} $dim><Svg>{toolGlyphs.frame}</Svg></ToolSlot>
            <SpatialText>Spatial Indexes...</SpatialText>
            <MoreGlyph $gap={0}><Caret $color="#222" /></MoreGlyph>
          </ToolStrip>
        </ToolRow>
      </ToolArea>

      <Workspace>
        <SideTabs>
          <SideTab>
            <Svg>
              <rect x="2" y="1" width="12" height="14" fill="#f4f0d8" stroke="#a89850" />
              <rect x="0" y="6" width="10" height="7" fill="#e8b830" />
            </Svg>
            <SideTabText>Data Sources</SideTabText>
          </SideTab>
        </SideTabs>

        <Toolbox>
          <DockHeader>
            <DockTitle>Toolbox</DockTitle>
            <HeaderIcons color="#c6cede" />
          </DockHeader>
          <ToolboxBody>
            <ToolboxList>
              {toolboxControls.map((name) => <ToolboxEntry key={name} name={name} />)}
              <ToolboxGroup>
                <TreeBox />
                Containers
              </ToolboxGroup>
              {toolboxContainers.map((name) => <ToolboxEntry key={name} name={name} />)}
            </ToolboxList>
            <Scrollbar $width={15}>
              <ScrollButton><Chevron up /></ScrollButton>
              <ScrollTrack $top={21} $size={170} />
              <ScrollButton $tint><Chevron /></ScrollButton>
            </Scrollbar>
            <Cursor left={16} top={373} size={9} />
          </ToolboxBody>
        </Toolbox>

        <Center>
          <DocTabs>
            <DocTab>
              Form1.vb [Design]*
              <svg width="11" height="11" viewBox="0 0 11 11"><path d="M1 1l9 9M10 1l-9 9" stroke="#9aa0ac" strokeWidth="1.8" /></svg>
            </DocTab>
            <DocMenu><Caret $color="#c6cede" /></DocMenu>
          </DocTabs>
          <DocArea>
            <Form>
              <FormTitle>
                <svg width="14" height="14" viewBox="0 0 14 14">
                  <rect x="1" y="3" width="6" height="9" fill="#d86848" />
                  <rect x="6" y="2" width="7" height="8" fill="#f0c840" />
                  <rect x="5" y="8" width="6" height="4" fill="#c0a8d8" />
                </svg>
                <FormTitleText>R 'n R--For Reading and Refreshment</FormTitleText>
                <FormButton>
                  <svg width="12" height="12" viewBox="0 0 12 12"><rect x="2" y="9" width="5" height="2" fill="#d8e2fa" /></svg>
                </FormButton>
                <FormButton>
                  <svg width="12" height="12" viewBox="0 0 12 12"><path d="M1 1h10v10H1zM1 3h10" fill="none" stroke="#d8e2fa" strokeWidth="1.4" /></svg>
                </FormButton>
                <FormButton $close>
                  <svg width="12" height="12" viewBox="0 0 12 12"><path d="M2 2l8 8M10 2l-8 8" stroke="#f4e4e8" strokeWidth="2" /></svg>
                </FormButton>
              </FormTitle>
              <FormBody>
                <FormLeft>
                  <GroupBox $width={144} $height={107}>
                    <Legend $left={8}>Department</Legend>
                    <RadioList>
                      <RadioItem label="RadioButton1" selected />
                      <RadioItem label="RadioButton2" />
                      <RadioItem label="RadioButton3" />
                      <RadioItem label="RadioButton4" />
                    </RadioList>
                  </GroupBox>
                  <DashedPanel />
                  <WideField $width={330} $height={18} />
                </FormLeft>
                <FormRight>
                  <GroupBox $width={264} $height={91}>
                    <Legend $left={7}>GroupBox2</Legend>
                    <FieldRow $top={17}>
                      <FieldLabel>Label1</FieldLabel>
                      <TextField $width={98} />
                    </FieldRow>
                    <FieldRow $top={52}>
                      <FieldLabel>Label2</FieldLabel>
                      <TextField $width={98} />
                    </FieldRow>
                  </GroupBox>
                  <RichBox />
                  <FormButtons>
                    <PushButton $default>Sign In</PushButton>
                    <PushButton>Button2</PushButton>
                    <PushButton>Exit</PushButton>
                  </FormButtons>
                </FormRight>
              </FormBody>
            </Form>
          </DocArea>
          <ErrorPanel>
            <DockHeader>
              <DockTitle>Error List</DockTitle>
              <HeaderIcons color="#c6cede" />
            </DockHeader>
            <ErrorBar>
              <FilterButton $width={67}>
                <FilterIcon><Svg><circle cx="8" cy="8" r="7" fill="#c83a2c" stroke="#e8a090" /><path d="M5 5l6 6M11 5l-6 6" stroke="#f4d8d0" strokeWidth="2" /></Svg></FilterIcon>
                0 Errors
              </FilterButton>
              <FilterButton $width={84}>
                <FilterIcon><Svg><path d="M8 1l7 13.5H1z" fill="#f4e040" stroke="#888" /><path d="M8 5.5v5M8 11.5v2" stroke="#222" strokeWidth="1.6" /></Svg></FilterIcon>
                0 Warnings
              </FilterButton>
              <FilterButton $width={84}>
                <FilterIcon><Svg><circle cx="8" cy="8" r="7" fill="#fff" stroke="#7a8ac8" strokeWidth="1.5" /><path d="M8 4v1.5M8 7v5" stroke="#2a3a98" strokeWidth="2" /></Svg></FilterIcon>
                0 Messages
              </FilterButton>
            </ErrorBar>
            <ColumnHeader>
              <ColumnCell $pad={0} />
              <ColumnCell $pad={0} />
              <ColumnCell $pad={9}>Description</ColumnCell>
              <ColumnCell $pad={9}>File</ColumnCell>
              <ColumnCell $pad={12}>Line</ColumnCell>
              <ColumnCell $pad={9}>Column</ColumnCell>
              <ColumnCell $pad={11}>Project</ColumnCell>
            </ColumnHeader>
            <ErrorRows />
          </ErrorPanel>
        </Center>

        <Right>
          <SolutionPanel>
            <DockHeader>
              <DockTitle>Solution Explorer</DockTitle>
              <HeaderIcons color="#c6cede" />
            </DockHeader>
            <PaneBar $height={25}>
              <PaneIcon><Svg>{paneGlyphs.props}</Svg></PaneIcon>
              <PaneSep $gap={6} />
              <PaneButton $gap={5}><Svg>{paneGlyphs.files}</Svg></PaneButton>
              <PaneButton $gap={5}><Svg>{paneGlyphs.refresh}</Svg></PaneButton>
              <PaneSep $gap={6} />
              <PaneButton $gap={6}><Svg>{paneGlyphs.code}</Svg></PaneButton>
              <PaneButton $gap={5}><Svg>{paneGlyphs.view}</Svg></PaneButton>
            </PaneBar>
            <Tree>
              <TreeRow $bold>
                <TreeIcon><Svg>{paneGlyphs.project}</Svg></TreeIcon>
                <span>RnR</span>
              </TreeRow>
              <TreeRow $indent={4}>
                <TreeStem />
                <TreeIcon><Svg>{paneGlyphs.myProject}</Svg></TreeIcon>
                <span>My Project</span>
              </TreeRow>
              <TreeRow $indent={4} $mark>
                <TreeStem />
                <TreeIcon><Svg>{paneGlyphs.formFile}</Svg></TreeIcon>
                <span>Form1.vb</span>
              </TreeRow>
            </Tree>
          </SolutionPanel>

          <PropertiesPanel>
            <PropHeader $active>
              <DockTitle>Properties</DockTitle>
              <HeaderIcons color="#6a6a58" />
            </PropHeader>
            <ObjectCombo>
              <ObjectName>RadioButton1</ObjectName>
              <ObjectType>System.Windows.Forn</ObjectType>
              <Caret $color="#222" />
            </ObjectCombo>
            <PaneBar $height={26}>
              <PaneIcon><Svg>{paneGlyphs.category}</Svg></PaneIcon>
              <PaneButton $gap={3} $on $wide={21}><Svg>{paneGlyphs.az}</Svg></PaneButton>
              <PaneSep $gap={5} />
              <PaneButton $gap={3} $on $wide={20}><Svg>{paneGlyphs.list}</Svg></PaneButton>
              <PaneButton $gap={3}><Svg>{paneGlyphs.bolt}</Svg></PaneButton>
              <PaneSep $gap={7} />
              <PaneButton $gap={5}><Svg>{paneGlyphs.pages}</Svg></PaneButton>
            </PaneBar>
            <PropGrid>
              <PropList>
                {properties.map((p) => (
                  <PropRow key={p.name}>
                    <PropGutter>{p.plus && <PlusBox />}</PropGutter>
                    <PropName $selected={p.selected}>{p.name}</PropName>
                    <PropValue $bold={p.bold}>
                      {p.value}
                      {p.selected && <EditBox />}
                    </PropValue>
                  </PropRow>
                ))}
              </PropList>
              <Scrollbar $width={15}>
                <ScrollButton $tint><Chevron up /></ScrollButton>
                <ScrollTrack $top={92} $size={22} />
                <ScrollButton $tint><Chevron /></ScrollButton>
              </Scrollbar>
              <Cursor left={174} top={134} size={12} />
            </PropGrid>
            <PropDesc>
              <PropDescTitle>Text</PropDescTitle>
              The text associated with the control.
            </PropDesc>
          </PropertiesPanel>
        </Right>
      </Workspace>

      <Status>Ready</Status>
      <TaskEdge />
    </Window>
  );
};

export default App;
